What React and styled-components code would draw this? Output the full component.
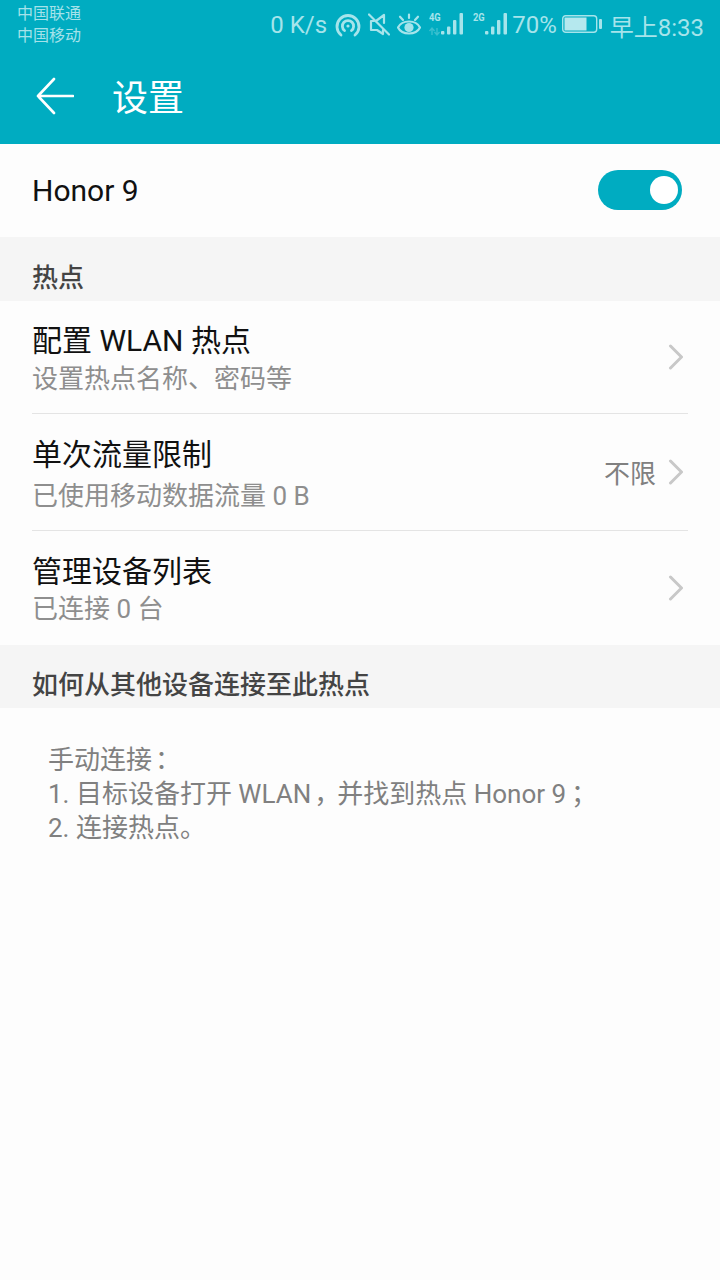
import React from 'react'
import styled, { createGlobalStyle } from 'styled-components'

const teal = '#00acc1'
const FONT = '"Roboto", "Noto Sans CJK SC", sans-serif'

const Global = createGlobalStyle`
  html, body { margin: 0; padding: 0; background: #fdfdfd; }
  body { font-family: ${FONT}; }
  * { box-sizing: border-box; }
`

const Page = styled.div`
  width: 720px;
  height: 1280px;
  overflow: hidden;
  background: #fdfdfd;
`

const Header = styled.header`
  height: 144px;
  background: ${teal};
`

const StatusBar = styled.div`
  height: 48px;
  display: flex;
  justify-content: space-between;
  align-items: flex-start;
  padding: 3px 16px 0 17px;
  color: #a6e4eb;
`

const Carriers = styled.div`
  font-size: 16px;
  line-height: 22px;
  color: #a5e2ea;
`

const StatusRight = styled.div`
  display: flex;
  align-items: center;
  height: 44px;
  font-size: 24px;
`

const Slot = styled.span`
  display: flex;
  margin-left: ${p => p.$gap}px;
`

const Signal = styled.div`
  position: relative;
  display: flex;
  width: 36px;
  height: 24px;
  margin-left: ${p => p.$gap}px;
`

const NetLabel = styled.span`
  position: absolute;
  left: 1px;
  top: -1px;
  font-size: 11px;
  line-height: 12px;
  font-weight: 700;
  transform: scaleX(0.85);
  transform-origin: left center;
`

const Percent = styled.span`
  margin-left: 4px;
  margin-right: 5px;
`

const Clock = styled.span`
  margin-left: 8px;
`

const TitleBar = styled.div`
  height: 96px;
  display: flex;
  align-items: center;
  padding: 6px 0 0 36px;
  color: #fff;
`

const BackIcon = styled.svg`
  margin-bottom: 6px;
`

const Title = styled.h1`
  margin: 0 0 0 38px;
  font-size: 36px;
  font-weight: 400;
  line-height: 40px;
`

const ToggleRow = styled.div`
  height: 93px;
  display: flex;
  align-items: center;
  justify-content: space-between;
  padding: 0 38px 0 32px;
  font-size: 30px;
  color: #111;
`

const Toggle = styled.div`
  width: 84px;
  height: 40px;
  margin-bottom: 1px;
  border-radius: 20px;
  background: ${teal};
  display: flex;
  align-items: center;
  justify-content: flex-end;
  padding-right: 4px;
`

const Knob = styled.div`
  width: 28px;
  height: 28px;
  border-radius: 50%;
  background: #fff;
`

const SectionTitle = styled.div`
  height: ${p => p.$h}px;
  background: #f5f5f5;
  padding: 0 32px 9px;
  display: flex;
  align-items: flex-end;
  font-size: 26px;
  line-height: 28px;
  font-weight: 500;
  color: #444;
`

const List = styled.div`
  padding: 0 32px;
`

const Row = styled.div`
  height: ${p => p.$h}px;
  display: flex;
  align-items: center;
  justify-content: space-between;
  border-bottom: ${p => (p.$last ? 'none' : '1px solid #e4e4e4')};
`

const RowText = styled.div`
  align-self: flex-start;
  padding-top: ${p => p.$top}px;
`

const RowLabel = styled.div`
  font-size: 30px;
  line-height: 36px;
  color: #111;
`

const RowHint = styled.div`
  margin-top: ${p => p.$gap}px;
  font-size: 26px;
  line-height: 32px;
  color: #8e8e8e;
`

const RowEnd = styled.div`
  display: flex;
  align-items: center;
  color: #808080;
  font-size: 26px;
  margin: 0 3px 1px 0;
`

const RowValue = styled.span`
  margin-right: 11px;
`

const Note = styled.div`
  padding: 35px 48px;
  font-size: 26px;
  line-height: 34px;
  color: #808080;
`

// half-width glyph inside a full-width slot, nudged right the way this system font sets its marks
const Mark = styled.span`
  display: inline-block;
  font-feature-settings: "halt";
  margin: 0 ${p => 13 - p.$shift}px 0 ${p => p.$shift}px;
`

const Chevron = () => (
  <svg width="18" height="26" viewBox="0 0 18 26" fill="none" stroke="#c8c8c8" strokeWidth="3" strokeLinecap="round" strokeLinejoin="round">
    <path d="M3.5 2 L14.5 13 L3.5 24" />
  </svg>
)

const Bars = ({ traffic }) => (
  <svg width="36" height="24" viewBox="0 0 36 24" fill="currentColor">
    <rect x="13" y="18" width="3.4" height="3.5" rx="1" />
    <rect x="19" y="13.5" width="3.4" height="8" rx="1" />
    <rect x="25" y="7" width="3.4" height="14.5" rx="1" />
    <rect x="31.5" y="0" width="3.5" height="21.5" rx="1" />
    {traffic && (
      <path
        d="M4 22 V15 M1.5 18 L4 15 L6.5 18 M9 15 V22 M6.5 19 L9 22 L11.5 19"
        fill="none"
        stroke="currentColor"
        strokeWidth="1.4"
        opacity="0.35"
      />
    )}
  </svg>
)

const Hotspot = () => (
  <svg width="26" height="24" viewBox="0 0 26 24" fill="none" stroke="currentColor" strokeWidth="2.8" strokeLinecap="round">
    <path d="M6 22 A11 11 0 1 1 20 22" />
    <path d="M9.5 17.5 A5.6 5.6 0 1 1 16.5 17.5" />
    <circle cx="13" cy="13" r="1.6" fill="currentColor" stroke="none" />
  </svg>
)

const Muted = () => (
  <svg width="22" height="24" viewBox="0 0 22 24" fill="none" stroke="currentColor" strokeWidth="2.2" strokeLinejoin="round" strokeLinecap="round">
    <path d="M8 8 L16 2 V10 M6 8 H3 V17 H9 L15 21 V17" />
    <path d="M1 1.5 L21 21.5" />
  </svg>
)

const Eye = () => (
  <svg width="24" height="24" viewBox="0 0 24 24" fill="none" stroke="currentColor" strokeWidth="2.2" strokeLinecap="round">
    <path d="M1 14.5 C5 6.5 19 6.5 23 14.5 C19 22.5 5 22.5 1 14.5 Z" />
    <circle cx="12" cy="14.5" r="4.6" fill="currentColor" stroke="none" />
    <path d="M12 1.5 V5 M3 3.7 L6 7 M21 3.7 L18 7" />
  </svg>
)

const Battery = () => (
  <svg width="40" height="20" viewBox="0 0 40 20" fill="none">
    <rect x="0.7" y="0.7" width="34" height="16.6" rx="3" stroke="currentColor" strokeWidth="1.4" />
    <rect x="2.5" y="2.5" width="22" height="13" fill="#b5e8ee" />
    <rect x="37" y="4" width="3" height="10" rx="1" fill="currentColor" />
  </svg>
)

const BackArrow = () => (
  <BackIcon width="38" height="38" viewBox="0 0 38 38" fill="none" stroke="#fff" strokeWidth="2.6" strokeLinecap="round" strokeLinejoin="round">
    <path d="M37 19 H2 M18 2 L2 19 L18 36" />
  </BackIcon>
)

export default function App() {
  return (
    <Page>
      <Global />
      <Header>
        <StatusBar>
          <Carriers>
            <div>中国联通</div>
            <div>中国移动</div>
          </Carriers>
          <StatusRight>
            <span>0 K/s</span>
            <Slot $gap={8}><Hotspot /></Slot>
            <Slot $gap={7}><Muted /></Slot>
            <Slot $gap={7}><Eye /></Slot>
            <Signal $gap={7}>
              <NetLabel>4G</NetLabel>
              <Bars traffic />
            </Signal>
            <Signal $gap={8}>
              <NetLabel>2G</NetLabel>
              <Bars />
            </Signal>
            <Percent>70%</Percent>
            <Battery />
            <Clock>早上8:33</Clock>
          </StatusRight>
        </StatusBar>
        <TitleBar>
          <BackArrow />
          <Title>设置</Title>
        </TitleBar>
      </Header>

      <ToggleRow>
        <span>Honor 9</span>
        <Toggle><Knob /></Toggle>
      </ToggleRow>

      <SectionTitle $h={64}>热点</SectionTitle>
      <List>
        <Row $h={113}>
          <RowText $top={22}>
            <RowLabel>配置 WLAN 热点</RowLabel>
            <RowHint $gap={4}>设置热点名称、密码等</RowHint>
          </RowText>
          <RowEnd><Chevron /></RowEnd>
        </Row>
        <Row $h={117}>
          <RowText $top={23}>
            <RowLabel>单次流量限制</RowLabel>
            <RowHint $gap={7}>已使用移动数据流量 0 B</RowHint>
          </RowText>
          <RowEnd><RowValue>不限</RowValue><Chevron /></RowEnd>
        </Row>
        <Row $h={114} $last>
          <RowText $top={23}>
            <RowLabel>管理设备列表</RowLabel>
            <RowHint $gap={3}>已连接 0 台</RowHint>
          </RowText>
          <RowEnd><Chevron /></RowEnd>
        </Row>
      </List>

      <SectionTitle $h={63}>如何从其他设备连接至此热点</SectionTitle>
      <Note>
        <div>手动连接<Mark $shift={3}>：</Mark></div>
        <div>1. 目标设备打开 WLAN<Mark $shift={3}>，</Mark>并找到热点 Honor 9<Mark $shift={5}>；</Mark></div>
        <div>2. 连接热点。</div>
      </Note>
    </Page>
  )
}
